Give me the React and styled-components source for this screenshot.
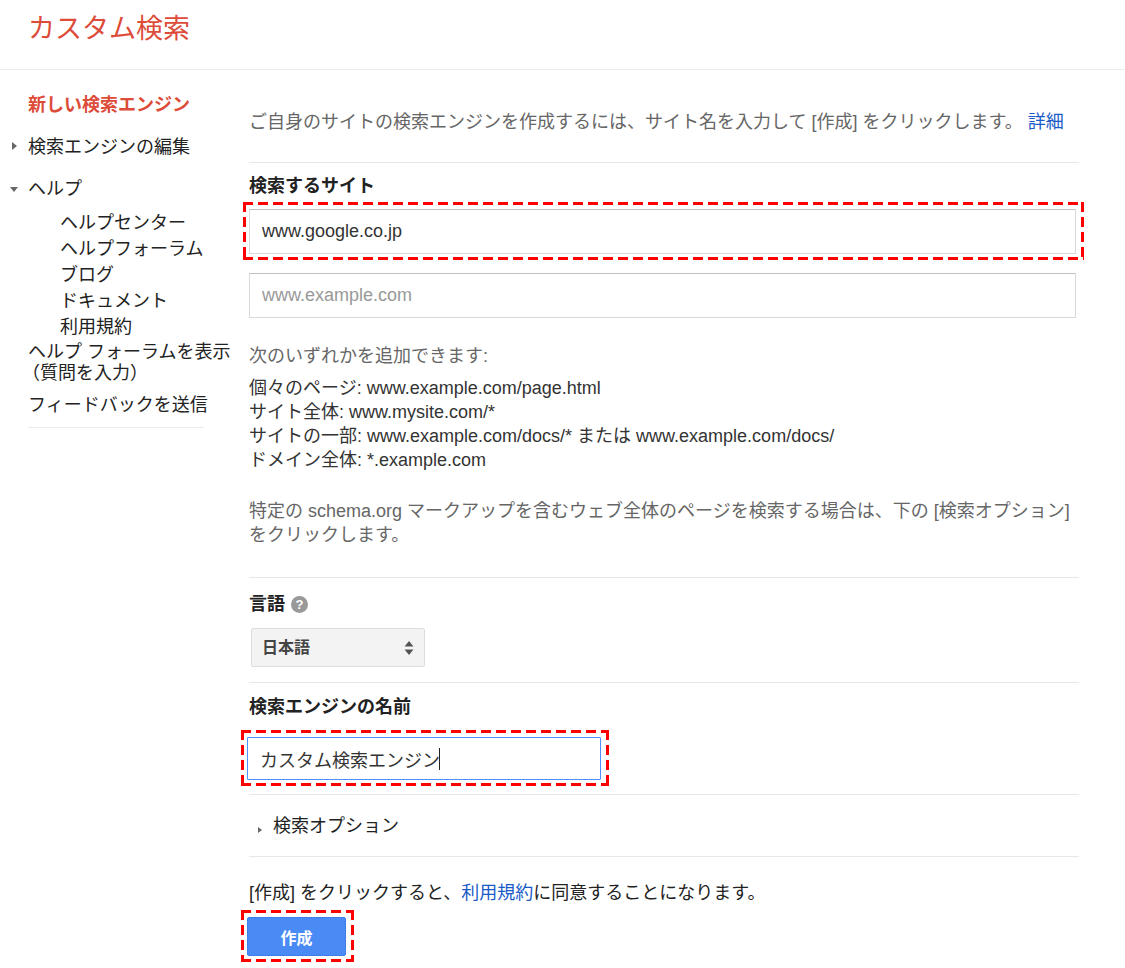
import React from 'react';
import styled, { createGlobalStyle } from 'styled-components';

const GlobalStyle = createGlobalStyle`
    body {
        margin: 0;
        background: #fff;
        color: #222;
        font-family: "Liberation Sans", Arial, "Noto Sans CJK JP", sans-serif;
        font-size: 18px;
    }
    * {
        box-sizing: border-box;
    }
`;

const App = () => {
    return (
        <>
            <GlobalStyle />
            <Header>
                <Title>カスタム検索</Title>
            </Header>
            <Layout>
                <Sidebar>
                    <NavItem active>新しい検索エンジン</NavItem>
                    <NavItem>
                        <Caret />
                        検索エンジンの編集
                    </NavItem>
                    <NavItem>
                        <Caret open />
                        ヘルプ
                    </NavItem>
                    <SubList>
                        <li>ヘルプセンター</li>
                        <li>ヘルプフォーラム</li>
                        <li>ブログ</li>
                        <li>ドキュメント</li>
                        <li>利用規約</li>
                    </SubList>
                    <ForumLink>
                        ヘルプ フォーラムを表示
                        <br />
                        <Paren>（質問を入力）</Paren>
                    </ForumLink>
                    <Feedback>フィードバックを送信</Feedback>
                </Sidebar>

                <Main>
                    <Section top={40} bottom={28}>
                        <Muted>
                            ご自身のサイトの検索エンジンを作成するには、サイト名を入力して [作成] をクリックします。 <Link href="#">詳細</Link>
                        </Muted>
                    </Section>

                    <Section top={11} bottom={30}>
                        <Label>検索するサイト</Label>
                        <Annotated block gap={4}>
                            <TextInput defaultValue="www.google.co.jp" />
                        </Annotated>
                        <TextInput placeholder="www.example.com" style={{ marginTop: 19 }} />
                        <Muted as="div" style={{ marginTop: 26 }}>次のいずれかを追加できます:</Muted>
                        <Examples>
                            <li>個々のページ: www.example.com/page.html</li>
                            <li>サイト全体: www.mysite.com/*</li>
                            <li>サイトの一部: www.example.com/docs/* または www.example.com/docs/</li>
                            <li>ドメイン全体: *.example.com</li>
                        </Examples>
                        <Muted as="div" style={{ marginTop: 27 }}>
                            特定の schema.org マークアップを含むウェブ全体のページを検索する場合は、下の [検索オプション]
                            <br />
                            をクリックします。
                        </Muted>
                    </Section>

                    <Section top={14} bottom={15}>
                        <Label>
                            言語 <HelpIcon>?</HelpIcon>
                        </Label>
                        <Select>
                            <span>日本語</span>
                            <Spinner>
                                <svg width="10" height="16" viewBox="0 0 10 16">
                                    <path d="M5 1 L9.5 6.5 H0.5 Z" fill="#555" />
                                    <path d="M5 15 L9.5 9.5 H0.5 Z" fill="#555" />
                                </svg>
                            </Spinner>
                        </Select>
                    </Section>

                    <Section top={12} bottom={14}>
                        <Label>検索エンジンの名前</Label>
                        <Annotated gap={11}>
                            <FieldWrap>
                                <TextInput focused width={354} defaultValue="カスタム検索エンジン" />
                                <TextCursor style={{ left: 12 + 10 * 18 }} />
                            </FieldWrap>
                        </Annotated>
                    </Section>

                    <Section top={19} bottom={18}>
                        <Options>
                            <SmallArrow />
                            検索オプション
                        </Options>
                    </Section>

                    <Section top={24} bottom={12} last>
                        <div>
                            [作成] をクリックすると、<Link href="#">利用規約</Link>に同意することになります。
                        </div>
                        <Annotated gap={5}>
                            <Button>作成</Button>
                        </Annotated>
                    </Section>
                </Main>
            </Layout>
        </>
    );
};

export default App;

const Header = styled.header`
    height: 70px;
    padding: 13px 28px 0;
    border-bottom: 1px solid #ebebeb;
`;

const Title = styled.h1`
    margin: 0;
    font-weight: normal;
    font-size: 27px;
    line-height: 32px;
    color: #dd4b39;
`;

const Layout = styled.div`
    display: flex;
    padding-left: 10px;
    gap: 45px;
`;

const Sidebar = styled.nav`
    width: 194px;
    flex-shrink: 0;
    padding-top: 22px;
    white-space: nowrap;
`;

const NavItem = styled.div`
    position: relative;
    padding-left: 18px;
    line-height: 26px;
    margin-bottom: 16px;
    font-weight: ${({ active }) => (active ? 'bold' : 'normal')};
    color: ${({ active }) => (active ? '#dd4b39' : '#222')};
`;

const Caret = styled.span`
    position: absolute;
    left: ${({ open }) => (open ? '0' : '2px')};
    top: ${({ open }) => (open ? '11px' : '8px')};
    width: 0;
    height: 0;
    border-style: solid;
    border-color: transparent;
    ${({ open }) =>
        open
            ? 'border-width: 5px 4px 0 4px; border-top-color: #666;'
            : 'border-width: 4.5px 0 4.5px 5px; border-left-color: #666;'}
`;

const SubList = styled.ul`
    list-style: none;
    margin: -8px 0 0;
    padding: 0 0 0 50px;
    li {
        line-height: 26px;
    }
`;

const ForumLink = styled.div`
    padding-left: 18px;
    line-height: 21px;
    padding-top: 2px;
`;

const Paren = styled.span`
    margin-left: -6px;
`;

const Feedback = styled.div`
    margin: 8px 0 0 18px;
    line-height: 26px;
    padding-bottom: 9px;
    border-bottom: 1px solid #ebebeb;
`;

const Main = styled.main`
    width: 830px;
`;

const Section = styled.section`
    padding: ${({ top }) => top}px 0 ${({ bottom }) => bottom}px;
    border-bottom: ${({ last }) => (last ? 'none' : '1px solid #e8e8e8')};
    line-height: 24px;
`;

const Muted = styled.p`
    margin: 0;
    color: #666;
`;

const Link = styled.a`
    color: #1a5bc7;
    text-decoration: none;
`;

const Label = styled.div`
    font-weight: bold;
    color: #222;
    display: flex;
    align-items: center;
    gap: 6px;
`;

const dash = (dir) => `repeating-linear-gradient(${dir}, #f00 0 10px, transparent 10px 15px)`;

const Annotated = styled.div`
    display: ${({ block }) => (block ? 'block' : 'inline-block')};
    width: ${({ block }) => (block ? '841px' : 'auto')};
    margin: ${({ block, gap }) => (block ? `${gap}px 0 -6px -6px` : `${gap}px -6px -6px -8px`)};
    padding: 7px 8px 6px 6px;
    vertical-align: top;
    background:
        ${dash('90deg')} top left / 100% 3px no-repeat,
        ${dash('90deg')} bottom left / 100% 3px no-repeat,
        ${dash('180deg')} top left / 3px 100% no-repeat,
        ${dash('180deg')} top right / 3px 100% no-repeat;
    & > * {
        display: block;
    }
`;

const FieldWrap = styled.div`
    position: relative;
`;

const TextCursor = styled.span`
    position: absolute;
    top: 11px;
    width: 1px;
    height: 22px;
    background: #222;
`;

const TextInput = styled.input`
    display: block;
    width: ${({ width }) => (width ? `${width}px` : '827px')};
    height: ${({ focused }) => (focused ? 43 : 45)}px;
    padding: 0 12px;
    border: 1px solid ${({ focused }) => (focused ? '#4d90fe' : '#d9d9d9')};
    border-top-color: ${({ focused }) => (focused ? '#4d90fe' : '#c0c0c0')};
    border-radius: 1px;
    outline: none;
    font: inherit;
    font-size: 18px;
    color: #333;
    background: #fff;
    &::placeholder {
        color: #999;
    }
`;

const Examples = styled.ul`
    list-style: none;
    margin: 8px 0 0;
    padding: 0;
    color: #333;
`;

const HelpIcon = styled.span`
    display: inline-flex;
    align-items: center;
    justify-content: center;
    width: 17px;
    height: 17px;
    border-radius: 50%;
    background: #999;
    color: #fff;
    font-size: 13px;
    font-weight: bold;
    line-height: 1;
`;

const Select = styled.div`
    display: flex;
    align-items: center;
    justify-content: space-between;
    width: 174px;
    height: 39px;
    margin: 12px 0 0 2px;
    padding: 0 10px 0 10px;
    background: #f3f3f3;
    border: 1px solid #dcdcdc;
    border-radius: 2px;
    font-size: 16px;
    font-weight: bold;
    color: #444;
`;

const Spinner = styled.span`
    display: flex;
`;

const Options = styled.div`
    position: relative;
    padding-left: 24px;
    color: #222;
`;

const SmallArrow = styled.span`
    position: absolute;
    left: 9px;
    top: 13px;
    width: 0;
    height: 0;
    border-style: solid;
    border-color: transparent;
    border-width: 3.5px 0 3.5px 4px;
    border-left-color: #666;
`;

const Button = styled.button`
    width: 99px;
    height: 39px;
    background: #4a8af4;
    border: 1px solid #3d7ee8;
    border-radius: 2px;
    color: #fff;
    font-family: inherit;
    font-size: 16px;
    font-weight: bold;
`;
